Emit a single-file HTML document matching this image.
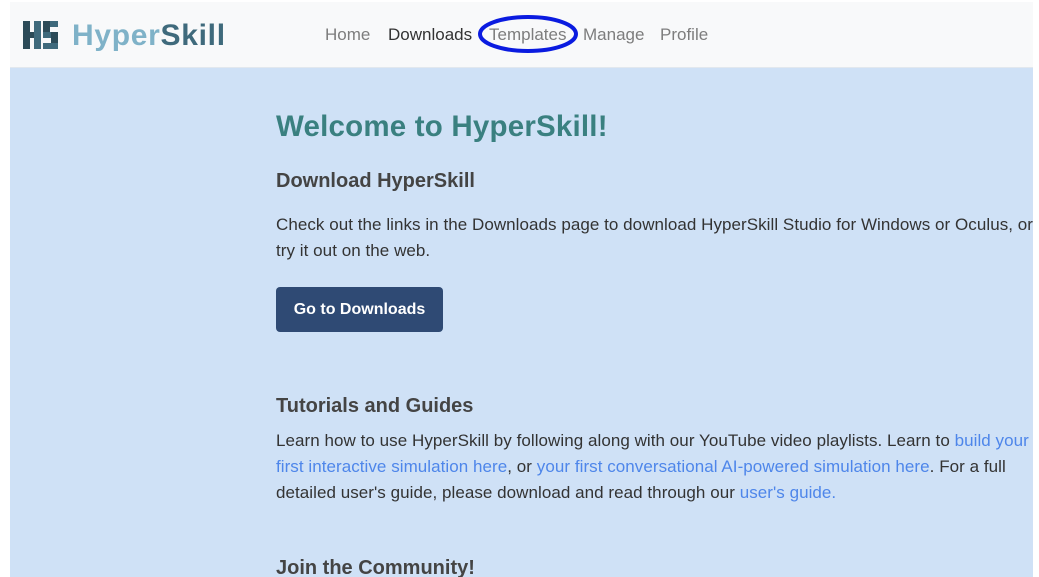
<!DOCTYPE html>
<html><head><meta charset="utf-8"><style>
*{margin:0;padding:0;box-sizing:border-box}
html,body{width:1039px;height:577px;overflow:hidden;background:#fff;font-family:"Liberation Sans",Arial,sans-serif}
#wrap{position:absolute;left:10px;top:2px;width:1023px;height:575px;background:#cfe1f6;overflow:hidden}
#nav{position:absolute;left:0;top:0;width:1023px;height:66px;background:#f8f9fa;border-bottom:1px solid #e2e8ee}
.logo{position:absolute;left:62px;top:17px;font-size:30px;font-weight:bold;letter-spacing:0.7px}
.logo .a{color:#7fb2c8}.logo .b{color:#3f6a7c}
.nav a{position:absolute;top:23px;font-size:17px;color:#7d7d7d;text-decoration:none}
.l{position:absolute;left:266px;white-space:nowrap;color:#333}
.p{font-size:17px;letter-spacing:0.05px}
.lk{color:#4e86ea}
.h{font-size:20px;font-weight:bold;color:#444}
</style></head><body>
<div id="wrap">
<div id="nav">
<svg style="position:absolute;left:13px;top:17px" width="36" height="32" viewBox="0 0 36 32">
<rect x="0" y="2" width="7" height="28" fill="#2c4b58"/><rect x="7" y="13" width="6" height="6" fill="#2c4b58"/><rect x="11" y="2" width="7" height="28" fill="#3f6a7c"/>
<rect x="20" y="2" width="15" height="6" fill="#3f6a7c"/><rect x="20" y="2" width="7" height="15" fill="#2c4b58"/><rect x="20" y="13" width="15" height="6" fill="#3f6a7c"/><rect x="28" y="13" width="7" height="17" fill="#2c4b58"/><rect x="20" y="24" width="15" height="6" fill="#3f6a7c"/>
</svg>
<div class="logo"><span class="a">Hyper</span><span class="b">Skill</span></div>
<div class="nav">
<a style="left:315px">Home</a>
<a style="left:378px;color:#333">Downloads</a>
<a style="left:479px">Templates</a>
<a style="left:573px">Manage</a>
<a style="left:650px">Profile</a>
</div>
<svg style="position:absolute;left:467px;top:12px" width="102" height="42"><ellipse cx="51" cy="20" rx="48" ry="17" fill="none" stroke="#0a1be0" stroke-width="4"/></svg>
</div>
<div class="l" style="top:108px;font-size:29.5px;font-weight:bold;color:#3a8080;letter-spacing:0.2px">Welcome to HyperSkill!</div>
<div class="l h" style="top:168px">Download HyperSkill</div>
<div class="l p" style="top:213px">Check out the links in the Downloads page to download HyperSkill Studio for Windows or Oculus, or</div>
<div class="l p" style="top:239px">try it out on the web.</div>
<div style="position:absolute;left:266px;top:285px;width:167px;height:45px;background:#2f4a74;border-radius:4px;color:#fff;font-weight:bold;font-size:16px;text-align:center;line-height:45px">Go to Downloads</div>
<div class="l h" style="top:393px">Tutorials and Guides</div>
<div class="l p" style="top:429px">Learn how to use HyperSkill by following along with our YouTube video playlists. Learn to <span class="lk">build your</span></div>
<div class="l p" style="top:455px"><span class="lk">first interactive simulation here</span>, or <span class="lk">your first conversational AI-powered simulation here</span>. For a full</div>
<div class="l p" style="top:481px">detailed user's guide, please download and read through our <span class="lk">user's guide.</span></div>
<div class="l h" style="top:555px">Join the Community!</div>
</div>
</body></html>
